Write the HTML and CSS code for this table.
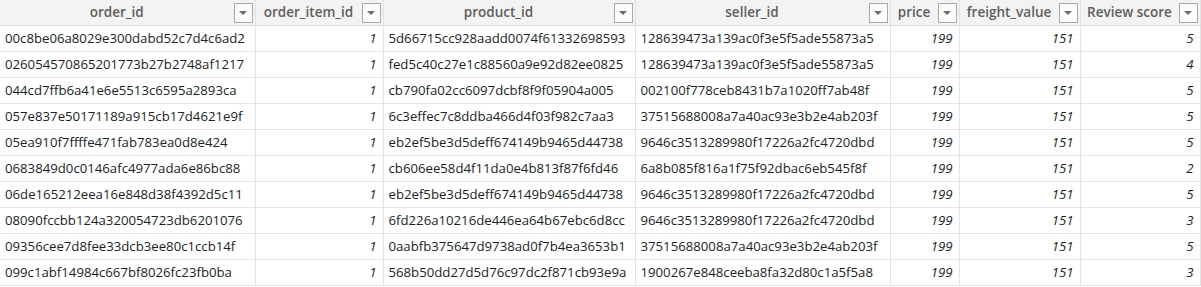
FILE: index.html
```html
<!DOCTYPE html>
<html>
<head>
<meta charset="utf-8">
<link rel="stylesheet" href="styles.css">
</head>
<body>
<table class="grid">
  <colgroup>
    <col class="c1"><col class="c2"><col class="c3"><col class="c4"><col class="c5"><col class="c6"><col class="c7">
  </colgroup>
  <thead>
    <tr>
      <th><div class="hd"><span class="lbl">order_id</span><span class="fb"><i></i></span></div></th>
      <th><div class="hd"><span class="lbl">order_item_id</span><span class="fb"><i></i></span></div></th>
      <th><div class="hd"><span class="lbl">product_id</span><span class="fb"><i></i></span></div></th>
      <th><div class="hd"><span class="lbl">seller_id</span><span class="fb"><i></i></span></div></th>
      <th><div class="hd"><span class="lbl">price</span><span class="fb"><i></i></span></div></th>
      <th><div class="hd"><span class="lbl">freight_value</span><span class="fb"><i></i></span></div></th>
      <th><div class="hd"><span class="lbl">Review score</span><span class="fb"><i></i></span></div></th>
    </tr>
  </thead>
  <tbody>
    <tr><td>00c8be06a8029e300dabd52c7d4c6ad2</td><td class="n">1</td><td>5d66715cc928aadd0074f61332698593</td><td>128639473a139ac0f3e5f5ade55873a5</td><td class="n">199</td><td class="n">151</td><td class="n">5</td></tr>
    <tr><td>026054570865201773b27b2748af1217</td><td class="n">1</td><td>fed5c40c27e1c88560a9e92d82ee0825</td><td>128639473a139ac0f3e5f5ade55873a5</td><td class="n">199</td><td class="n">151</td><td class="n">4</td></tr>
    <tr><td>044cd7ffb6a41e6e5513c6595a2893ca</td><td class="n">1</td><td>cb790fa02cc6097dcbf8f9f05904a005</td><td>002100f778ceb8431b7a1020ff7ab48f</td><td class="n">199</td><td class="n">151</td><td class="n">5</td></tr>
    <tr><td>057e837e50171189a915cb17d4621e9f</td><td class="n">1</td><td>6c3effec7c8ddba466d4f03f982c7aa3</td><td>37515688008a7a40ac93e3b2e4ab203f</td><td class="n">199</td><td class="n">151</td><td class="n">5</td></tr>
    <tr><td>05ea910f7ffffe471fab783ea0d8e424</td><td class="n">1</td><td>eb2ef5be3d5deff674149b9465d44738</td><td>9646c3513289980f17226a2fc4720dbd</td><td class="n">199</td><td class="n">151</td><td class="n">5</td></tr>
    <tr><td>0683849d0c0146afc4977ada6e86bc88</td><td class="n">1</td><td>cb606ee58d4f11da0e4b813f87f6fd46</td><td>6a8b085f816a1f75f92dbac6eb545f8f</td><td class="n">199</td><td class="n">151</td><td class="n">2</td></tr>
    <tr><td>06de165212eea16e848d38f4392d5c11</td><td class="n">1</td><td>eb2ef5be3d5deff674149b9465d44738</td><td>9646c3513289980f17226a2fc4720dbd</td><td class="n">199</td><td class="n">151</td><td class="n">5</td></tr>
    <tr><td>08090fccbb124a320054723db6201076</td><td class="n">1</td><td>6fd226a10216de446ea64b67ebc6d8cc</td><td>9646c3513289980f17226a2fc4720dbd</td><td class="n">199</td><td class="n">151</td><td class="n">3</td></tr>
    <tr><td>09356cee7d8fee33dcb3ee80c1ccb14f</td><td class="n">1</td><td>0aabfb375647d9738ad0f7b4ea3653b1</td><td>37515688008a7a40ac93e3b2e4ab203f</td><td class="n">199</td><td class="n">151</td><td class="n">5</td></tr>
    <tr><td>099c1abf14984c667bf8026fc23fb0ba</td><td class="n">1</td><td>568b50dd27d5d76c97dc2f871cb93e9a</td><td>1900267e848ceeba8fa32d80c1a5f5a8</td><td class="n">199</td><td class="n">151</td><td class="n">3</td></tr>
  </tbody>
</table>
</body>
</html>
```
FILE: styles.css
```css
html, body {
  margin: 0;
  padding: 0;
  background: #ffffff;
}

body {
  font-family: "Open Sans", "Noto Sans", sans-serif;
  font-size: 13.2px;
  color: #201f1e;
}

.grid {
  border-collapse: collapse;
  table-layout: fixed;
  width: 1200px;
}

.c1 { width: 255px; }
.c2 { width: 128px; }
.c3 { width: 252px; }
.c4 { width: 255px; }
.c5 { width: 69px; }
.c6 { width: 121px; }
.c7 { width: 120px; }

.grid th {
  height: 25px;
  padding: 0;
  background: #f3f3f3;
  border-right: 1px solid #e3e3e3;
  border-bottom: 1px solid #dcdcdc;
  font-weight: 600;
  font-size: 13.5px;
  color: #605e5c;
}

.hd {
  display: flex;
  align-items: center;
  height: 25px;
  padding-right: 2px;
}

.lbl {
  flex: 1;
  text-align: center;
  white-space: nowrap;
  overflow: hidden;
  line-height: 25px;
}

.fb {
  flex: none;
  width: 17px;
  height: 18px;
  border: 1px solid #a8a8a8;
  background: #fbfbfb;
  display: flex;
  align-items: center;
  justify-content: center;
}

.fb i {
  display: block;
  width: 0;
  height: 0;
  border-left: 4px solid transparent;
  border-right: 4px solid transparent;
  border-top: 4px solid #6b6b6b;
}

.grid td {
  height: 25px;
  padding: 0 5px;
  border-right: 1px solid #e3e3e3;
  border-bottom: 1px solid #e3e3e3;
  white-space: nowrap;
  overflow: hidden;
  line-height: 25px;
}

.grid td.n {
  text-align: right;
  font-style: italic;
  padding-right: 6px;
}
```
